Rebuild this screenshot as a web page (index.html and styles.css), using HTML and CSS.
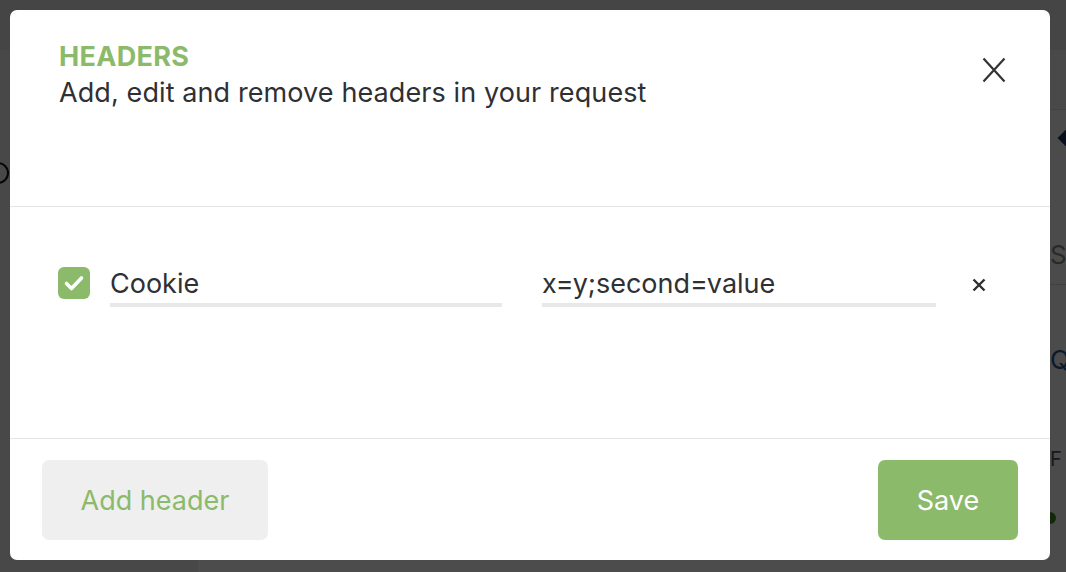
FILE: index.html
```html
<!DOCTYPE html>
<html>
<head>
<meta charset="utf-8">
<link rel="stylesheet" href="styles.css">
</head>
<body>
<div class="page">
  <div class="topbar"></div>
  <div class="main">
    <div class="left-col"><span class="ghost-ring"></span></div>
    <div class="center-col"></div>
    <div class="right-col">
      <div class="rc-nav"></div>
      <div class="rc-arrow"><span class="diamond"></span></div>
      <div class="rc-search">Se</div>
      <div class="rc-q">Q</div>
      <div class="rc-fi">FI</div>
      <div class="rc-dot"></div>
    </div>
  </div>
</div>

<div class="overlay">
  <div class="modal">
    <div class="modal-header">
      <div class="titles">
        <div class="title">HEADERS</div>
        <div class="subtitle">Add, edit and remove headers in your request</div>
      </div>
      <button class="close" aria-label="Close">
        <svg width="24" height="26" viewBox="0 0 24 26"><path d="M1.5 1.5 L22.5 24.5 M22.5 1.5 L1.5 24.5" stroke="#333" stroke-width="2.2" fill="none"/></svg>
      </button>
    </div>
    <div class="modal-body">
      <div class="header-row">
        <span class="checkbox">
          <svg width="32" height="32" viewBox="0 0 32 32"><path d="M8.5 16.5 L13.5 21.5 L23.5 11" stroke="#fff" stroke-width="3.6" fill="none" stroke-linecap="round" stroke-linejoin="round"/></svg>
        </span>
        <div class="field name">Cookie</div>
        <div class="field value">x=y;second=value</div>
        <button class="remove" aria-label="Remove">
          <svg width="14" height="14" viewBox="0 0 14 14"><path d="M1.5 1.5 L12.5 12.5 M12.5 1.5 L1.5 12.5" stroke="#2d2d2d" stroke-width="2.4" fill="none"/></svg>
        </button>
      </div>
    </div>
    <div class="modal-footer">
      <button class="btn btn-add">Add header</button>
      <button class="btn btn-save">Save</button>
    </div>
  </div>
</div>
</body>
</html>
```

FILE: styles.css
```css
* { box-sizing: border-box; }
html, body { margin: 0; padding: 0; }
body {
  width: 1066px;
  height: 572px;
  overflow: hidden;
  font-family: Inter, "Liberation Sans", Arial, sans-serif;
  background: #fff;
  position: relative;
}

/* page behind the modal */
.page { height: 572px; display: flex; flex-direction: column; color: #222; }
.topbar { height: 50px; background: #e6e6e6; flex: none; }
.main { flex: 1; display: flex; }
.left-col { width: 198px; background: #f2f2f2; padding-top: 112px; }
.ghost-ring { display: block; width: 22px; height: 22px; border: 2px solid #111; border-radius: 50%; margin-left: -13px; }
.center-col { flex: 1; background: #fff; }
.right-col { width: 84px; background: #fcfcfc; display: flex; flex-direction: column; padding-left: 68px; }
.rc-nav { height: 60px; margin-left: -68px; border-bottom: 1px solid #e2e2e2; background: #f6f6f6; }
.rc-arrow { margin-top: 22px; height: 12px; }
.diamond { display: block; width: 12px; height: 12px; background: #1b3b5a; transform: rotate(45deg); margin-left: 10px; }
.rc-search { margin-top: 96px; font-size: 26px; line-height: 30px; height: 45px; border-bottom: 1px solid #d8d8d8; color: #8a8a8a; margin-left: -68px; padding-left: 68px; white-space: nowrap; }
.rc-q { margin-top: 60px; font-size: 26px; line-height: 30px; color: #1f5a94; }
.rc-fi { margin-top: 72px; font-size: 20px; line-height: 24px; letter-spacing: 3px; color: #555; white-space: nowrap; }
.rc-dot { margin-top: 41px; width: 12px; height: 12px; border-radius: 50%; background: #3a8a1a; margin-left: -6px; }

.overlay {
  position: absolute;
  inset: 0;
  background: rgba(0, 0, 0, 0.7);
  padding: 10px 16px 12px 10px;
}

.modal {
  width: 1040px;
  height: 550px;
  background: #fff;
  border-radius: 7px;
  display: flex;
  flex-direction: column;
  color: #2f3033;
}

.modal-header {
  height: 197px;
  flex: none;
  display: flex;
  justify-content: space-between;
  align-items: flex-start;
  padding: 29px 44px 0 49px;
  border-bottom: 1px solid #e4e4e4;
}
.title {
  font-size: 27px;
  font-weight: 700;
  color: #8bba6a;
  line-height: 36px;
  letter-spacing: 0.3px;
}
.subtitle {
  font-size: 27px;
  line-height: 36px;
  letter-spacing: 0.1px;
}
.close {
  border: 0;
  background: none;
  padding: 0;
  margin-top: 18px;
  width: 24px;
  height: 26px;
  cursor: pointer;
}

.modal-body {
  flex: 1;
  display: flex;
  align-items: flex-start;
  padding: 58px 48px 0 48px;
  border-bottom: 1px solid #e4e4e4;
}
.header-row {
  width: 100%;
  display: flex;
  align-items: flex-start;
}
.checkbox {
  width: 32px;
  height: 32px;
  border-radius: 6px;
  background: #8bba6a;
  display: flex;
  align-items: center;
  justify-content: center;
  flex: none;
  margin-top: 2px;
}
.field {
  font-size: 27px;
  line-height: 36px;
  border-bottom: 4px solid #e8e8e8;
  height: 42px;
  padding-top: 1px;
}
.field.name { width: 392px; margin-left: 20px; }
.field.value { width: 394px; margin-left: 40px; }
.remove {
  border: 0;
  background: none;
  padding: 0;
  margin-left: 36px;
  width: 14px;
  height: 14px;
  margin-top: 13px;
}

.modal-footer {
  height: 121px;
  flex: none;
  display: flex;
  justify-content: space-between;
  padding: 21px 32px 0 32px;
}
.btn {
  height: 80px;
  border: 0;
  border-radius: 7px;
  font-family: Inter, "Liberation Sans", Arial, sans-serif;
  font-size: 27px;
}
.btn-add { width: 226px; background: #efefef; color: #8bba6a; }
.btn-save { width: 140px; background: #8bba6a; color: #fff; }
```
